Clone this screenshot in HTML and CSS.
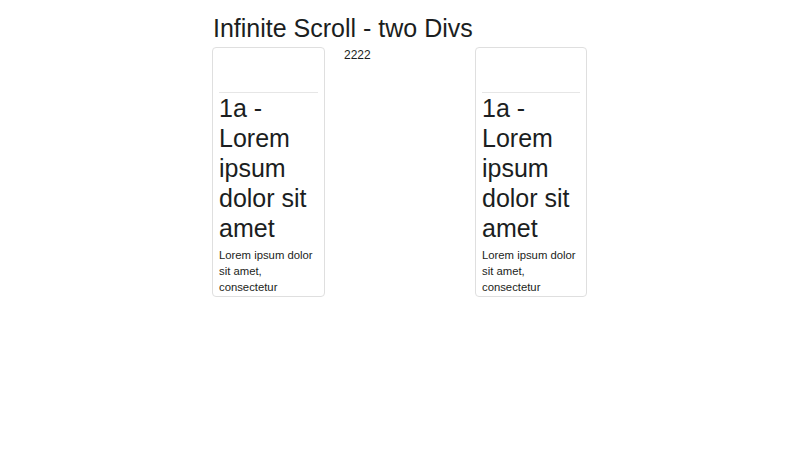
FILE: index.html
```html
<!DOCTYPE html>
<html>
<head>
<meta charset="utf-8">
<link rel="stylesheet" href="styles.css">
</head>
<body>
<div class="wrap">
  <h1 class="title">Infinite Scroll - two Divs</h1>
  <div class="row">
    <div class="card">
      <div class="card-top"></div>
      <div class="card-body">
        <h2 class="card-title">1a - Lorem ipsum dolor sit amet</h2>
        <p class="card-text">Lorem ipsum dolor sit amet, consectetur</p>
      </div>
    </div>
    <div class="middle">2222</div>
    <div class="card card-right">
      <div class="card-top"></div>
      <div class="card-body">
        <h2 class="card-title">1a - Lorem ipsum dolor sit amet</h2>
        <p class="card-text">Lorem ipsum dolor sit amet, consectetur</p>
      </div>
    </div>
  </div>
</div>
</body>
</html>
```

FILE: styles.css
```css
html, body {
  margin: 0;
  padding: 0;
  background: #ffffff;
}
body {
  font-family: "Liberation Sans", Arial, sans-serif;
  color: #1b1e21;
}
.wrap {
  width: 376px;
  margin: 0 auto;
  padding-top: 13px;
}
.title {
  font-size: 25px;
  line-height: 30px;
  font-weight: 400;
  margin: 0 0 4px 1px;
}
.row {
  display: flex;
  align-items: flex-start;
}
.card {
  width: 113px;
  box-sizing: border-box;
  border: 1px solid #dfdfdf;
  border-radius: 4px;
  padding: 0 6px 1px 6px;
}
.card-right {
  width: 112px;
}
.card-top {
  height: 44px;
  border-bottom: 1px solid #e6e6e6;
}
.card-title {
  font-size: 25px;
  line-height: 30px;
  font-weight: 400;
  margin: 0 0 4px 0;
}
.card-text {
  font-size: 11.3px;
  line-height: 16px;
  margin: 0;
}
.middle {
  width: 150px;
  box-sizing: border-box;
  padding-left: 19px;
  font-size: 12px;
  line-height: 16px;
}
```
